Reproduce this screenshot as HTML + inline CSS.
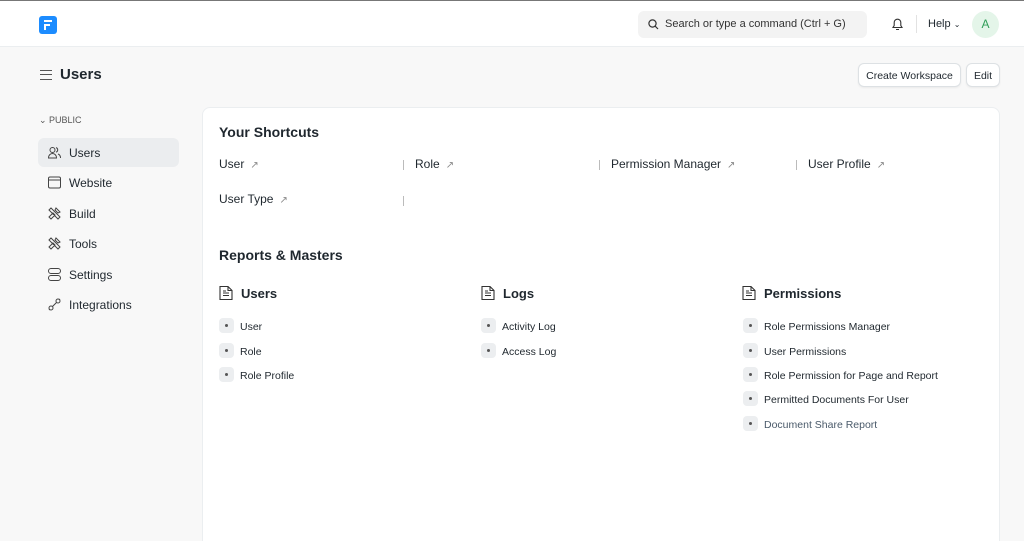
<!DOCTYPE html>
<html><head><meta charset="utf-8"><style>
*{box-sizing:border-box;margin:0;padding:0}
html,body{width:1024px;height:541px;overflow:hidden}
body{background:#f8f8f8;font-family:"Liberation Sans",sans-serif;color:#1f272e;position:relative}
.top{position:absolute;left:0;top:0;width:1024px;height:47px;background:#fff;border-top:1px solid #777;border-bottom:1px solid #ebeef0}
.logo{position:absolute;left:39px;top:15px;width:18px;height:18px;background:#1c8cff;border-radius:3px}
.search{position:absolute;left:638px;top:10px;width:229px;height:27px;background:#f3f3f3;border-radius:6px;font-size:11px;color:#333;padding:7px 0 0 27px;white-space:nowrap}
.abs{position:absolute}
.btn{position:absolute;top:63px;height:24px;background:#fff;border:1px solid #dde1e4;border-radius:6px;font-size:10.5px;padding:6px 0 0;text-align:center;white-space:nowrap;box-shadow:0 1px 2px rgba(0,0,0,.06)}
.nav{position:absolute;left:38px;width:141px;height:29px;font-size:12px;padding:8px 0 0 31px}
.nav svg{position:absolute;left:10px;top:8px}
.card{position:absolute;left:202px;top:107px;width:798px;height:450px;background:#fff;border:1px solid #ebeef0;border-radius:8px}
.h{font-size:14px;font-weight:bold;position:absolute}
.sc{position:absolute;font-size:12px}
.sc span{color:#888;font-size:10px;margin-left:6px}
.sep{position:absolute;width:1px;height:10px;background:#bbb}
.li{position:absolute;font-size:10.5px;padding-left:21px}
.li:before{content:"";position:absolute;left:0;top:-3px;width:15px;height:15px;background:#eceef0;border-radius:4px}
.li:after{content:"";position:absolute;left:6px;top:3px;width:3px;height:3px;background:#555;border-radius:50%}
.gh{position:absolute;font-size:13px;font-weight:bold;padding-left:22px}
.gh svg{position:absolute;left:0;top:-1px}
</style></head><body>
<div class="top">
<div class="logo"><div class="abs" style="left:5px;top:4px;width:8px;height:2px;background:#fff"></div><div class="abs" style="left:5px;top:8px;width:6px;height:2px;background:#fff"></div><div class="abs" style="left:5px;top:8px;width:2px;height:6px;background:#fff"></div></div>
<div class="search"><svg class="abs" style="left:10px;top:8px" width="11" height="11" viewBox="0 0 11 11" fill="none" stroke="#333" stroke-width="1.2"><circle cx="4.5" cy="4.5" r="3.6"/><path d="M7.2 7.2L10 10"/></svg>Search or type a command (Ctrl + G)</div>
<svg class="abs" style="left:891px;top:16px" width="13" height="14" viewBox="0 0 13 14" fill="none" stroke="#333" stroke-width="1.1"><path d="M2 10.5h9l-1.2-2V5.5a3.3 3.3 0 0 0-6.6 0v3z M5 12.5h3"/></svg>
<div class="abs" style="left:916px;top:14px;width:1px;height:18px;background:#e2e2e2"></div>
<div class="abs" style="left:928px;top:17px;font-size:11px">Help <span style="font-size:8px">⌄</span></div>
<div class="abs" style="left:972px;top:10px;width:27px;height:27px;border-radius:50%;background:#e4f5e9;color:#2f9d58;font-size:12px;text-align:center;line-height:27px">A</div>
</div>
<div class="abs" style="left:40px;top:70px;width:12px;height:10px;border-top:1.5px solid #555;border-bottom:1.5px solid #555"><div style="margin-top:3px;border-top:1.5px solid #555"></div></div>
<div class="abs" style="left:60px;top:66px;font-size:15px;font-weight:bold">Users</div>
<div class="btn" style="left:858px;width:103px">Create Workspace</div>
<div class="btn" style="left:966px;width:34px">Edit</div>
<div class="abs" style="left:39px;top:115px;font-size:9px;color:#555">⌄ PUBLIC</div>
<div class="nav" style="top:138px;background:#ebedef;border-radius:6px"><svg width="13" height="13" viewBox="0 0 13 13" fill="none" stroke="#444"><circle cx="4.5" cy="4" r="2.5"/><path d="M0.5 12c0-3 2-4.5 4-4.5s4 1.5 4 4.5z M8 1.6a2.4 2.4 0 0 1 0 4.6 M10 8c1.5.5 2.5 2 2.5 4"/></svg>Users</div>
<div class="nav" style="top:168px"><svg width="13" height="13" viewBox="0 0 13 13" fill="none" stroke="#444"><rect x="0.5" y="1" width="12" height="11" rx="1.5"/><path d="M0.5 4h12"/></svg>Website</div>
<div class="nav" style="top:199px"><svg width="13" height="13" viewBox="0 0 13 13" fill="none" stroke="#444"><path d="M1 3l2-2 9 9-2 2z M8 1l4 4-2 1-3-3z M1 10l4-4 2 2-4 4z"/></svg>Build</div>
<div class="nav" style="top:229px"><svg width="13" height="13" viewBox="0 0 13 13" fill="none" stroke="#444"><path d="M1 3l2-2 9 9-2 2z M8 1l4 4-2 1-3-3z M1 10l4-4 2 2-4 4z"/></svg>Tools</div>
<div class="nav" style="top:260px"><svg width="13" height="13" viewBox="0 0 13 13" fill="none" stroke="#444"><rect x="0.5" y="0.5" width="12" height="5" rx="2.5"/><rect x="0.5" y="7.5" width="12" height="5" rx="2.5"/></svg>Settings</div>
<div class="nav" style="top:290px"><svg width="13" height="13" viewBox="0 0 13 13" fill="none" stroke="#444"><circle cx="3" cy="10" r="2"/><circle cx="10" cy="3" r="2"/><path d="M4.5 8.5l4-4 M1 12l0.5-.5 M12 1l-.5.5"/></svg>Integrations</div>
<div class="card"></div>
<div class="h" style="left:219px;top:124px">Your Shortcuts</div>
<div class="sc" style="left:219px;top:157px">User<span>↗</span></div>
<div class="sep" style="left:403px;top:160px"></div>
<div class="sc" style="left:415px;top:157px">Role<span>↗</span></div>
<div class="sep" style="left:599px;top:160px"></div>
<div class="sc" style="left:611px;top:157px">Permission Manager<span>↗</span></div>
<div class="sep" style="left:796px;top:160px"></div>
<div class="sc" style="left:808px;top:157px">User Profile<span>↗</span></div>
<div class="sc" style="left:219px;top:192px">User Type<span>↗</span></div>
<div class="sep" style="left:403px;top:196px"></div>
<div class="h" style="left:219px;top:247px">Reports &amp; Masters</div>
<div class="gh" style="left:219px;top:286px"><svg width="14" height="16" viewBox="0 0 14 16" fill="none" stroke="#333" stroke-width="1.1"><path d="M1 1.5h8l4 4v9H1z M9 1.5v4h4 M4 8h6 M4 10.5h6 M4 6h3"/></svg>Users</div>
<div class="gh" style="left:481px;top:286px"><svg width="14" height="16" viewBox="0 0 14 16" fill="none" stroke="#333" stroke-width="1.1"><path d="M1 1.5h8l4 4v9H1z M9 1.5v4h4 M4 8h6 M4 10.5h6 M4 6h3"/></svg>Logs</div>
<div class="gh" style="left:742px;top:286px"><svg width="14" height="16" viewBox="0 0 14 16" fill="none" stroke="#333" stroke-width="1.1"><path d="M1 1.5h8l4 4v9H1z M9 1.5v4h4 M4 8h6 M4 10.5h6 M4 6h3"/></svg>Permissions</div>
<div class="li" style="left:219px;top:321px">User</div>
<div class="li" style="left:219px;top:346px">Role</div>
<div class="li" style="left:219px;top:370px">Role Profile</div>
<div class="li" style="left:481px;top:321px">Activity Log</div>
<div class="li" style="left:481px;top:346px">Access Log</div>
<div class="li" style="left:743px;top:321px">Role Permissions Manager</div>
<div class="li" style="left:743px;top:346px">User Permissions</div>
<div class="li" style="left:743px;top:370px">Role Permission for Page and Report</div>
<div class="li" style="left:743px;top:394px">Permitted Documents For User</div>
<div class="li" style="left:743px;top:419px;color:#4a5a6a">Document Share Report</div>
</body></html>
